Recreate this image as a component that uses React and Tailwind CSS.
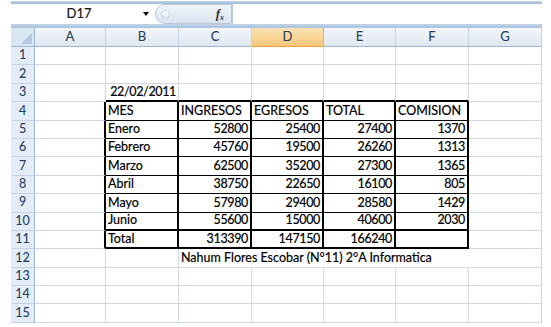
const cols = [
  { name: "A", w: "w-[71px]" },
  { name: "B", w: "w-[73px]" },
  { name: "C", w: "w-[73px]" },
  { name: "D", w: "w-[72px]" },
  { name: "E", w: "w-[72px]" },
  { name: "F", w: "w-[73px]" },
  { name: "G", w: "w-[73px]" },
];

const data = [
  ["Enero", 52800, 25400, 27400, 1370],
  ["Febrero", 45760, 19500, 26260, 1313],
  ["Marzo", 62500, 35200, 27300, 1365],
  ["Abril", 38750, 22650, 16100, 805],
  ["Mayo", 57980, 29400, 28580, 1429],
  ["Junio", 55600, 15000, 40600, 2030],
  ["Total", 313390, 147150, 166240, ""],
];

// cell content per row number -> array of 7 (A..G)
function rowCells(r) {
  const empty = ["", "", "", "", "", "", ""];
  if (r === 3) return ["", { v: "22/02/2011", right: true }, "", "", "", "", ""];
  if (r === 4) return ["", "MES", "INGRESOS", "EGRESOS", "TOTAL", "COMISION", ""];
  if (r >= 5 && r <= 11) {
    const d = data[r - 5];
    return ["", d[0], ...d.slice(1).map((v) => ({ v, right: true })), ""];
  }
  if (r === 12) return ["", "", { v: "Nahum Flores Escobar (N°11) 2°A Informatica", overflow: true }, "", "", "", ""];
  return empty;
}

function borderFor(r, c) {
  // c: 0..6 (A..G); table = rows 4..11, cols 1..5
  const inTable = r >= 4 && r <= 11 && c >= 1 && c <= 5;
  let right = "border-r border-r-[#d0d7e5]";
  let bottom = "border-b border-b-[#d0d7e5]";
  if (r >= 4 && r <= 11 && c === 0) right = "border-r-2 border-r-black";
  if (inTable) {
    right = "border-r-2 border-r-black";
    bottom = r === 10 || r === 11 ? "border-b-2 border-b-black" : "border-b border-b-black";
  }
  if (r === 3 && c >= 1 && c <= 5) bottom = "border-b-2 border-b-black";
  if (r === 12 && c >= 2 && c <= 5) right = "border-r border-r-transparent";
  return `${right} ${bottom}`;
}

function Cell({ r, c, content }) {
  const isObj = content && typeof content === "object";
  const text = isObj ? content.v : content;
  const right = isObj && content.right;
  const overflow = isObj && content.overflow;
  return (
    <div
      className={`${cols[c].w} h-full shrink-0 flex items-center px-[2px] ${right ? "justify-end tracking-[-0.35px]" : "justify-start"} ${borderFor(r, c)} ${overflow ? "overflow-visible whitespace-nowrap relative z-10" : "overflow-hidden"}`}
    >
      <span className="leading-none">{text}</span>
    </div>
  );
}

export default function App() {
  const rows = Array.from({ length: 15 }, (_, i) => i + 1);
  return (
    <div
      className="w-[551px] h-[327px] bg-white overflow-hidden text-[12.5px] text-black [-webkit-text-stroke:0.2px_#000]"
      style={{ fontFamily: "Lato, 'Liberation Sans', sans-serif" }}
    >
      <div className="pl-[11px] w-[542px]">
        {/* top strip */}
        <div className="h-[4px] border-t border-t-white bg-gradient-to-b from-[#c5d5e8] to-[#9fb8d6]" />
        {/* formula bar */}
        <div className="h-[20px] flex bg-white">
          <div className="w-[144px] flex items-center relative text-[#1e1e1e]">
            <span className="flex-1 text-center text-[13px] pl-[4px]">D17</span>
            <span className="w-0 h-0 mr-[6px] border-l-[3.5px] border-r-[3.5px] border-t-[4px] border-l-transparent border-r-transparent border-t-black" />
          </div>
          <div className="w-[77px] h-full rounded-l-[10px] border border-[#b7c7dc] bg-gradient-to-b from-[#f1f5fa] to-[#d9e3ef] flex items-center justify-between pl-[5px] pr-[7px]">
            <span className="w-[9px] h-[9px] rounded-full border border-[#c7d2df] bg-gradient-to-b from-white to-[#dfe6ee]" />
            <span
              className="italic text-[13px] text-[#333] font-semibold [-webkit-text-stroke:0px]"
              style={{ fontFamily: "'Liberation Serif', serif" }}
            >
              f<sub className="text-[8px]">x</sub>
            </span>
          </div>
          <div className="flex-1 border-l border-l-[#b7c7dc]" />
        </div>
        <div className="h-[4px] bg-gradient-to-b from-[#c4d4e7] to-[#a9c0dc]" />
        {/* column header row */}
        <div className="h-[19px] flex text-[#27415f] text-[13px] [-webkit-text-stroke:0.1px_#27415f]">
          <div className="w-[24px] h-full shrink-0 border-r border-b border-[#9eb6ce] bg-[#dbe6f3] relative overflow-hidden">
            <svg className="absolute right-[2px] bottom-[2px]" width="11" height="11" viewBox="0 0 11 11">
              <polygon points="11,0 11,11 0,11" fill="#b4c8e0" />
            </svg>
          </div>
          {cols.map((col) => (
            <div
              key={col.name}
              className={`${col.w} h-full shrink-0 flex items-center justify-center border-r border-b ${
                col.name === "D"
                  ? "bg-gradient-to-b from-[#fbe3b5] to-[#f6c67a] border-r-[#e0b26a] border-b-[#f2a33a]"
                  : "bg-gradient-to-b from-[#f3f6fb] to-[#dfe7f2] border-r-[#c5d2e3] border-b-[#9eb6ce]"
              }`}
            >
              {col.name}
            </div>
          ))}
        </div>
        {/* grid rows */}
        {rows.map((r) => {
          const cells = rowCells(r);
          return (
            <div key={r} className="h-[18.4px] flex">
              <div className="w-[24px] h-full shrink-0 flex items-center justify-center bg-[#e4ecf7] border-r border-r-[#9eb6ce] border-b border-b-[#c5d2e3] text-[#27415f] text-[12.5px] [-webkit-text-stroke:0.1px_#27415f]">
                {r}
              </div>
              {cells.map((content, c) => (
                <Cell key={c} r={r} c={c} content={content} />
              ))}
            </div>
          );
        })}
      </div>
    </div>
  );
}
